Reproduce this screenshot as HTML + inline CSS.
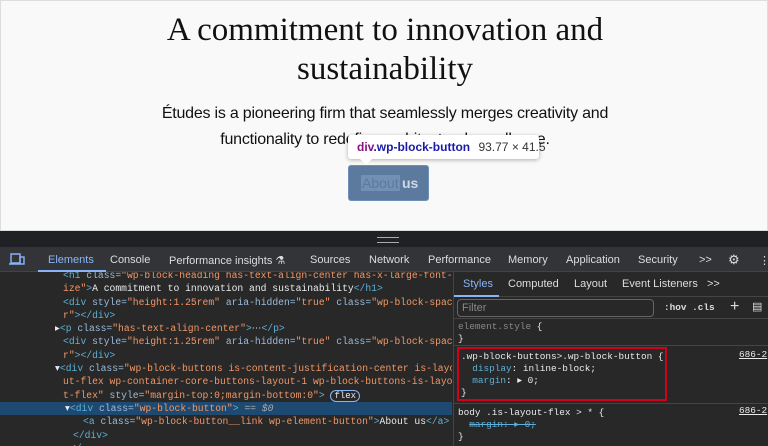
<!DOCTYPE html>
<html><head><meta charset="utf-8"><style>
*{margin:0;padding:0;box-sizing:border-box}
html,body{width:768px;height:446px;overflow:hidden}
body{background:#f9f9f9;position:relative;font-family:"Liberation Sans",sans-serif}
.page{position:absolute;left:0;top:0;width:768px;height:231px;background:#f9f9f9;border:1px solid #ddd}
h1{position:absolute;top:10px;left:0;width:768px;text-align:center;font-family:"Liberation Serif",serif;font-weight:400;font-size:33px;line-height:39px;color:#111}
.p{position:absolute;top:100px;left:0;width:768px;text-align:center;font-size:16px;line-height:26px;color:#111;letter-spacing:-0.22px}
.btn{position:absolute;left:347px;top:164px;width:81px;height:36px;background:#5b7a9e;border-radius:3px;border:1px solid #6d8fb8}
.btn span{position:absolute;top:9px;font-size:14px;font-weight:700;color:#cdd8e6}
.btn .a{left:12px;background:#7290b4;color:#5b7a9e;font-weight:400;padding:0 1px}
.tip{position:absolute;left:347px;top:134px;width:191px;height:24px;background:#fff;border-radius:3px;box-shadow:0 1px 4px rgba(0,0,0,.3);font-size:12px;line-height:24px;padding-left:9px;white-space:nowrap}
.tip:after{content:"";position:absolute;left:12px;bottom:-6px;border:6px solid transparent;border-top-color:#fff;border-bottom:0}
.dt{position:absolute;left:0;top:231px;width:768px;height:215px;background:#282828;font-size:11px;color:#ccc;overflow:hidden}
.rs{height:16px;background:#202124;position:relative}
.rs:after{content:"";position:absolute;left:377px;top:6px;width:22px;height:4px;border-top:1px solid #aaa;border-bottom:1px solid #aaa}
.tabs{height:25px;background:#333437;position:relative;border-bottom:1px solid #444}
.tabs span{position:absolute;top:7px;color:#ddd;white-space:nowrap}
.left{position:absolute;left:0;top:41px;width:452px;height:174px;overflow:hidden;font-family:"Liberation Mono",monospace;font-size:9.7px;line-height:13.3px}
.ln{height:13.3px;padding-left:63px;white-space:pre}
.t{color:#5db0d7}.at{color:#9bbbdc}.v{color:#f29766}.x{color:#e8eaed}
.sel{background:#1e4a72}
.right{position:absolute;left:453px;top:41px;width:315px;height:174px;border-left:1px solid #444;overflow:hidden}
.st{height:25px;position:relative;border-bottom:1px solid #444}
.st span{position:absolute;top:6px;color:#ddd;white-space:nowrap}
.code{font-family:"Liberation Mono",monospace;font-size:9.4px;line-height:12px;white-space:pre}
</style></head><body>
<div class="page">
<h1>A commitment to innovation and<br>sustainability</h1>
<div class="p">Études is a pioneering firm that seamlessly merges creativity and<br>functionality to redefine architectural excellence.</div>
<div class="btn"><span class="a">About</span><span style="left:53px">us</span></div>
<div class="tip"><b style="color:#881280;font-weight:700">div</b><b style="color:#1a1aa6">.wp-block-button</b> <span style="color:#333;margin-left:5px">93.77 × 41.5</span></div>
</div>
<div class="dt">
<div class="rs"></div>
<div class="tabs">
<svg style="position:absolute;left:9px;top:6px" width="16" height="13" viewBox="0 0 16 13"><path d="M2 1h9v9H2zM0 11h11" fill="none" stroke="#8ab4f8" stroke-width="1.4"/><rect x="11" y="4" width="4" height="7" fill="none" stroke="#8ab4f8" stroke-width="1.4"/></svg>
<span style="left:48px;color:#8ab4f8">Elements</span>
<div style="position:absolute;left:38px;top:23px;width:68px;height:2px;background:#8ab4f8"></div>
<span style="left:110px">Console</span>
<span style="left:169px">Performance insights ⚗</span>
<span style="left:310px">Sources</span>
<span style="left:369px">Network</span>
<span style="left:428px">Performance</span>
<span style="left:508px">Memory</span>
<span style="left:566px">Application</span>
<span style="left:638px">Security</span>
<span style="left:699px">&gt;&gt;</span>
<span style="left:728px;font-size:13px;top:5px">⚙</span>
<span style="left:759px">⋮</span>
</div>
<div class="left">
<div class="ln" style="margin-top:-3px"><span class="t">&lt;h1 </span><span class="at">class=</span><span class="v">"wp-block-heading has-text-align-center has-x-large-font-s</span></div>
<div class="ln"><span class="v">ize"</span><span class="t">&gt;</span><span class="x">A commitment to innovation and sustainability</span><span class="t">&lt;/h1&gt;</span></div>
<div class="ln"><span class="t">&lt;div </span><span class="at">style=</span><span class="v">"height:1.25rem"</span> <span class="at">aria-hidden=</span><span class="v">"true"</span> <span class="at">class=</span><span class="v">"wp-block-space</span></div>
<div class="ln"><span class="v">r"</span><span class="t">&gt;&lt;/div&gt;</span></div>
<div class="ln" style="padding-left:55px"><span class="x">▸</span><span class="t">&lt;p </span><span class="at">class=</span><span class="v">"has-text-align-center"</span><span class="t">&gt;</span><span class="x">⋯</span><span class="t">&lt;/p&gt;</span></div>
<div class="ln"><span class="t">&lt;div </span><span class="at">style=</span><span class="v">"height:1.25rem"</span> <span class="at">aria-hidden=</span><span class="v">"true"</span> <span class="at">class=</span><span class="v">"wp-block-space</span></div>
<div class="ln"><span class="v">r"</span><span class="t">&gt;&lt;/div&gt;</span></div>
<div class="ln" style="padding-left:55px"><span class="x">▾</span><span class="t">&lt;div </span><span class="at">class=</span><span class="v">"wp-block-buttons is-content-justification-center is-layo</span></div>
<div class="ln"><span class="v">ut-flex wp-container-core-buttons-layout-1 wp-block-buttons-is-layou</span></div>
<div class="ln"><span class="v">t-flex"</span> <span class="at">style=</span><span class="v">"margin-top:0;margin-bottom:0"</span><span class="t">&gt;</span> <span class="x" style="border:1px solid #8ab4f8;border-radius:7px;font-size:9px;padding:0 3px">flex</span></div>
<div class="ln sel" style="padding-left:65px"><span class="x">▾</span><span class="t">&lt;div </span><span class="at">class=</span><span class="v">"wp-block-button"</span><span class="t">&gt;</span> <span style="color:#aaa">== <i>$0</i></span></div>
<div class="ln" style="padding-left:83px"><span class="t">&lt;a </span><span class="at">class=</span><span class="v">"wp-block-button__link wp-element-button"</span><span class="t">&gt;</span><span class="x">About us</span><span class="t">&lt;/a&gt;</span></div>
<div class="ln" style="padding-left:73px"><span class="t">&lt;/div&gt;</span></div>
<div class="ln" style="padding-left:70px"><span class="t">&lt;/</span></div>
</div>
<div class="right">
<div class="st">
<span style="left:9px;color:#8ab4f8">Styles</span>
<div style="position:absolute;left:0;top:23px;width:45px;height:2px;background:#8ab4f8"></div>
<span style="left:54px">Computed</span>
<span style="left:120px">Layout</span>
<span style="left:168px">Event Listeners</span>
<span style="left:253px">&gt;&gt;</span>
</div>
<div style="position:relative;height:22px;border-bottom:1px solid #444">
<div style="position:absolute;left:3px;top:2px;width:197px;height:18px;border:1px solid #666;border-radius:4px;color:#888;padding-left:4px;line-height:16px">Filter</div>
<span class="code" style="position:absolute;left:210px;top:5px;color:#ddd;font-weight:700">:hov .cls</span>
<span style="position:absolute;left:276px;top:1px;color:#ddd;font-size:16px">+</span>
<span style="position:absolute;left:298px;top:3px;color:#ddd">▤</span>
</div>
<div class="code" style="padding:2px 4px;color:#888;height:27px;border-bottom:1px solid #444">element.style <span class="x">{</span>
<span class="x">}</span></div>
<div class="code x" style="position:relative;margin:1px 0 0 3px;width:210px;height:54px;border:2px solid #d0021b;padding:2px 2px">.wp-block-buttons&gt;.wp-block-button {
  <span class="t">display</span>: inline-block;
  <span class="t">margin</span>: ▸ 0;
}</div>
<span class="code x" style="position:absolute;left:285px;top:77px;text-decoration:underline">686-2</span>
<div class="code x" style="padding:3px 4px;border-top:1px solid #444;margin-top:2px">body .is-layout-flex &gt; * {
  <span class="t" style="text-decoration:line-through">margin: ▸ 0;</span>
}</div>
<span class="code x" style="position:absolute;left:285px;top:133px;text-decoration:underline">686-2</span>
</div>
</div>
</body></html>
